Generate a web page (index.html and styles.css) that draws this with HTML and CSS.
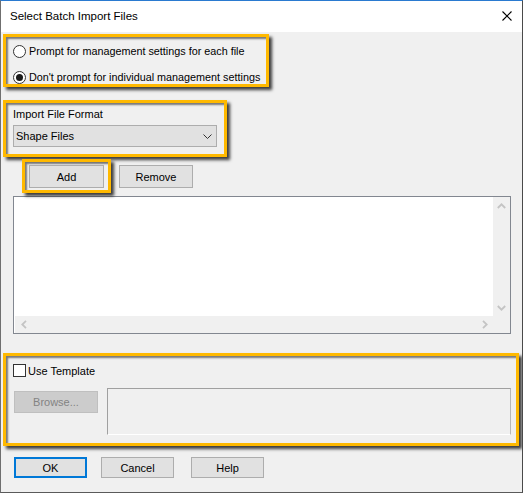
FILE: index.html
```html
<!DOCTYPE html>
<html lang="en">
<head>
    <title>Select Batch Import Files</title>
    <link rel="stylesheet" href="styles.css">
</head>
<body>
    <div class="dialog">
        <div class="titlebar">
            <span class="title">Select Batch Import Files</span>
            <svg class="close-icon" width="10" height="10" viewBox="0 0 10 10">
                <path d="M0.5 0.5 L9.5 9.5 M9.5 0.5 L0.5 9.5" stroke="#000" stroke-width="1.1" fill="none"/>
            </svg>
        </div>

        <div class="dialog-body">
            <!-- management settings -->
            <div class="callout radios">
                <label class="option-row"><span class="radio"></span>Prompt for management settings for each file</label>
                <label class="option-row"><span class="radio checked"></span>Don't prompt for individual management settings</label>
            </div>

            <!-- file format -->
            <div class="callout format">
                <div class="field-label">Import File Format</div>
                <div class="select">
                    <span>Shape Files</span>
                    <svg width="9" height="5" viewBox="0 0 9 5">
                        <path d="M0.5 0.5 L4.5 4.5 L8.5 0.5" stroke="#333" stroke-width="1" fill="none"/>
                    </svg>
                </div>
            </div>

            <div class="list-actions">
                <div class="callout add-callout">
                    <button type="button" class="btn">Add</button>
                </div>
                <button type="button" class="btn remove-btn">Remove</button>
            </div>

            <!-- file list -->
            <div class="listbox">
                <div class="list-area"></div>
                <div class="vscroll">
                    <span class="arrow-cell">
                        <svg width="9" height="6" viewBox="0 0 9 6"><path d="M0.8 5 L4.5 1.3 L8.2 5" stroke="#c4c4c4" stroke-width="1.8" fill="none"/></svg>
                    </span>
                    <span class="arrow-cell">
                        <svg width="9" height="6" viewBox="0 0 9 6"><path d="M0.8 1 L4.5 4.7 L8.2 1" stroke="#c4c4c4" stroke-width="1.8" fill="none"/></svg>
                    </span>
                </div>
                <div class="hscroll">
                    <span class="arrow-cell">
                        <svg width="6" height="9" viewBox="0 0 6 9"><path d="M5 0.8 L1.3 4.5 L5 8.2" stroke="#c4c4c4" stroke-width="1.8" fill="none"/></svg>
                    </span>
                    <span class="arrow-cell">
                        <svg width="6" height="9" viewBox="0 0 6 9"><path d="M1 0.8 L4.7 4.5 L1 8.2" stroke="#c4c4c4" stroke-width="1.8" fill="none"/></svg>
                    </span>
                </div>
                <div class="scroll-corner"></div>
            </div>

            <!-- template -->
            <div class="callout template">
                <label class="check-row"><span class="checkbox"></span>Use Template</label>
                <div class="template-row">
                    <button type="button" class="btn browse-btn" disabled>Browse...</button>
                    <div class="path-box"></div>
                </div>
            </div>

            <div class="dialog-buttons">
                <button type="button" class="btn default-btn">OK</button>
                <button type="button" class="btn cancel-btn">Cancel</button>
                <button type="button" class="btn help-btn">Help</button>
            </div>
        </div>
    </div>
</body>
</html>
```

FILE: styles.css
```css
body {
    margin: 0;
    padding: 0;
    background-color: white;
    font-family: 'Liberation Sans', Arial, sans-serif;
    font-size: 11px;
    color: #000;
}
.dialog {
    width: 523px;
    height: 493px;
    box-sizing: border-box;
    border: 1px solid #6f6f6f;
    border-top-color: #2a7ad0;
    border-right-color: #4a4a4a;
    border-bottom-color: #5a5a5a;
    background-color: #f0f0f0;
    overflow: hidden;
}
.titlebar {
    height: 31px;
    background-color: white;
    display: flex;
    align-items: center;
    justify-content: space-between;
    padding: 0 10px 0 9px;
}
.title {
    font-size: 11.5px;
    margin-top: -1px;
}
.close-icon {
    margin-top: -1px;
}
.dialog-body {
    height: 459px;
}

/* Yellow highlight boxes */
.callout {
    box-sizing: border-box;
    border: 3px solid #ffb900;
    box-shadow: 3px 3px 3px rgba(0, 0, 0, 0.75), inset 2px 2px 2px rgba(0, 0, 0, 0.5);
}

.radios {
    margin: 2px 0 0 2px;
    width: 266px;
    height: 53px;
    padding: 7px 0 0 7px;
    font-size: 10.8px;
}
.option-row {
    display: flex;
    align-items: center;
    height: 14px;
    gap: 3px;
}
.option-row + .option-row {
    margin-top: 12px;
}
.radio {
    width: 13px;
    height: 13px;
    box-sizing: border-box;
    border: 1px solid #333;
    border-radius: 50%;
    background-color: white;
    display: flex;
    align-items: center;
    justify-content: center;
}
.radio.checked::after {
    content: "";
    width: 7px;
    height: 7px;
    border-radius: 50%;
    background-color: #1a1a1a;
}

.format {
    margin: 13px 0 0 2px;
    width: 224px;
    height: 57px;
    padding: 0 7px 7px 7px;
}
.field-label {
    height: 22px;
    box-sizing: border-box;
    padding-top: 4px;
    line-height: 14px;
}
.select {
    height: 22px;
    box-sizing: border-box;
    border: 1px solid #adadad;
    background-color: #e1e1e1;
    display: flex;
    align-items: center;
    justify-content: space-between;
    padding: 0 4px 0 2px;
}

.btn {
    font-family: inherit;
    font-size: 11px;
    color: #000;
    background-color: #e1e1e1;
    border: 1px solid #adadad;
    width: 75px;
    height: 23px;
    padding: 0;
    margin: 0;
}

.list-actions {
    margin: 2px 0 0 21px;
    display: flex;
    align-items: flex-start;
    gap: 8px;
}
.add-callout {
    width: 89px;
    height: 34px;
    padding: 3px 0 0 4px;
}
.remove-btn {
    margin-top: 6px;
    width: 74px;
}

.listbox {
    margin: 3px 0 0 12px;
    width: 498px;
    height: 138px;
    box-sizing: border-box;
    border: 1px solid #828790;
    background-color: white;
    display: grid;
    grid-template-columns: 1fr 17px;
    grid-template-rows: 1fr 17px;
}
.vscroll {
    background-color: #f0f0f0;
    display: flex;
    flex-direction: column;
    justify-content: space-between;
}
.hscroll {
    background-color: #f0f0f0;
    display: flex;
    justify-content: space-between;
    margin-left: 1px;
}
.scroll-corner {
    background-color: #f0f0f0;
}
.arrow-cell {
    width: 17px;
    height: 17px;
    display: flex;
    align-items: center;
    justify-content: center;
}

.template {
    margin: 19px 0 0 2px;
    width: 516px;
    height: 93px;
    padding: 8px 0 0 7px;
}
.check-row {
    display: flex;
    align-items: center;
    height: 13px;
    gap: 2px;
}
.checkbox {
    width: 13px;
    height: 13px;
    box-sizing: border-box;
    border: 1px solid #333;
    background-color: white;
}
.template-row {
    margin-top: 11px;
    display: flex;
    align-items: flex-start;
    gap: 9px;
    padding-left: 1px;
}
.browse-btn {
    width: 84px;
    height: 22px;
    margin-top: 3px;
    background-color: #cccccc;
    border-color: #bfbfbf;
    color: #838383;
}
.path-box {
    width: 404px;
    height: 47px;
    box-sizing: border-box;
    border: 1px solid #a0a0a0;
    border-bottom-color: #ffffff;
    border-right-color: #b8b8b8;
}

.dialog-buttons {
    margin: 11px 0 0 13px;
    display: flex;
}
.dialog-buttons .btn {
    width: 73px;
    height: 21px;
}
.default-btn {
    border: 2px solid #0078d7 !important;
}
.cancel-btn {
    margin-left: 14px;
}
.help-btn {
    margin-left: 17px;
}
```
